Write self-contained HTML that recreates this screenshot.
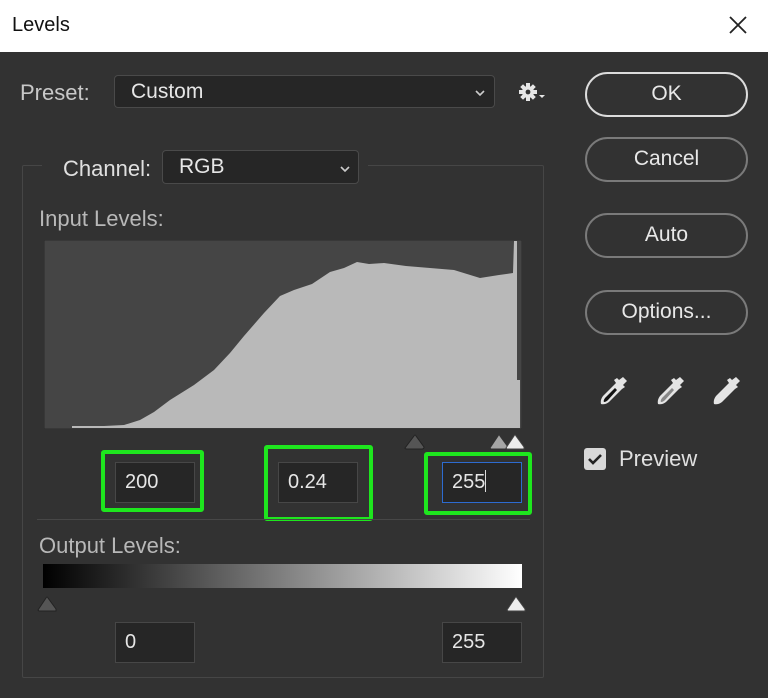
<!DOCTYPE html>
<html><head><meta charset="utf-8"><style>
*{margin:0;padding:0;box-sizing:border-box}
body{width:768px;height:698px;background:#323232;font-family:"Liberation Sans",sans-serif;position:relative;overflow:hidden;color:#ddd}
.a{position:absolute}
.t{font-size:22px;color:#c8c8c8;white-space:nowrap}
.fld{position:absolute;background:#262626;border:1px solid #474747;color:#e6e6e6;font-size:20px;padding-left:9px;line-height:38px}
.btn{position:absolute;left:585px;width:163px;height:45px;border:2px solid #7a7a7a;border-radius:23px;color:#e8e8e8;font-size:21px;text-align:center;line-height:40px}
.g{position:absolute;border:4px solid #1ee61e;border-radius:3px}
.dd{position:absolute;background:#262626;border:1px solid #4a4a4a;border-radius:4px;color:#e6e6e6;font-size:21px;padding-left:16px}
</style></head><body>
<div class="a" style="left:0;top:0;width:768px;height:52px;background:#fff"></div>
<div class="a" style="left:12px;top:14px;font-size:20px;color:#111">Levels</div>
<svg class="a" style="left:728px;top:15px" width="20" height="20"><path d="M2 2L18 18M18 2L2 18" stroke="#222" stroke-width="1.8"/></svg>

<div class="a t" style="left:20px;top:80px">Preset:</div>
<div class="dd" style="left:114px;top:75px;width:381px;height:33px;line-height:31px">Custom</div>
<svg class="a" style="left:474px;top:88px" width="12" height="10"><path d="M2 3L6 7L10 3" stroke="#ccc" stroke-width="1.6" fill="none"/></svg>
<svg class="a" style="left:518px;top:82px" width="32" height="22"><g transform="translate(10,10)" fill="#e6e6e6"><circle r="6"/><rect x="-2" y="-9" width="4" height="18"/><rect x="-9" y="-2" width="18" height="4"/><rect x="-2" y="-9" width="4" height="18" transform="rotate(45)"/><rect x="-2" y="-9" width="4" height="18" transform="rotate(-45)"/><circle r="2.4" fill="#323232"/></g><path d="M21 13h6l-3 3z" fill="#e6e6e6"/></svg>

<div class="a" style="left:22px;top:165px;width:522px;height:513px;border:1px solid #464646;border-radius:2px"></div>
<div class="a" style="left:42px;top:150px;width:326px;height:30px;background:#323232"></div>
<div class="a t" style="left:63px;top:156px;color:#e0e0e0">Channel:</div>
<div class="dd" style="left:162px;top:150px;width:197px;height:34px;line-height:32px">RGB</div>
<svg class="a" style="left:339px;top:164px" width="12" height="10"><path d="M2 3L6 7L10 3" stroke="#ccc" stroke-width="1.6" fill="none"/></svg>

<div class="a t" style="left:39px;top:206px;color:#b8b8b8">Input Levels:</div>
<svg class="a" style="left:44px;top:240px" width="478" height="189">
<rect x="0" y="0" width="478" height="189" fill="#454545" stroke="#2a2a2a"/>
<path d="M28 186 L60 186 L80 185 L96 180 L110 172 L126 160 L150 145 L170 130 L186 113 L200 96 L220 73 L236 56 L250 50 L268 44 L286 32 L300 28 L313 22 L325 24 L340 23 L362 26 L386 28 L410 30 L436 38 L455 35 L469 33 L470 1 L473 1 L473 140 L476 140 L476 188 L28 188Z" fill="#b9b9b9"/>
</svg>
<svg class="a" style="left:402px;top:430px" width="130" height="20">
<path d="M3 18 L12 6 Q13 4 14 6 L22 17 Q22 19 20 19 L5 19Q3 19 3 18Z" fill="#555" stroke="#222"/>
<path d="M88 18 L96 6 Q97 4 98 6 L106 17 L106 19 L89 19Z" fill="#a6a6a6" stroke="#333"/>
<path d="M104 18 L112 6 Q113 4 114 6 L122 17 L122 19 L105 19Z" fill="#ececec" stroke="#444"/>
</svg>

<div class="g" style="left:101px;top:450px;width:103px;height:62px"></div>
<div class="g" style="left:264px;top:445px;width:109px;height:76px"></div>
<div class="g" style="left:424px;top:452px;width:108px;height:63px"></div>
<div class="fld" style="left:115px;top:462px;width:80px;height:41px">200</div>
<div class="fld" style="left:278px;top:462px;width:80px;height:41px">0.24</div>
<div class="fld" style="left:442px;top:462px;width:80px;height:41px;border:1px solid #2d6bd0">255<span style="display:inline-block;width:1px;height:22px;background:#ddd;vertical-align:-4px"></span></div>

<div class="a" style="left:37px;top:519px;width:493px;height:1px;background:#474747"></div>
<div class="a t" style="left:39px;top:533px;color:#b8b8b8">Output Levels:</div>
<div class="a" style="left:43px;top:564px;width:479px;height:24px;background:linear-gradient(to right,#000,#fff)"></div>
<svg class="a" style="left:36px;top:591px" width="490" height="22">
<path d="M2 19 L10 7 Q11 5 12 7 L20 18 L20 20 L3 20Z" fill="#555" stroke="#222"/>
<path d="M471 19 L479 7 Q480 5 481 7 L489 18 L489 20 L472 20Z" fill="#ececec" stroke="#444"/>
</svg>
<div class="fld" style="left:115px;top:622px;width:80px;height:41px">0</div>
<div class="fld" style="left:442px;top:622px;width:80px;height:41px">255</div>

<div class="btn" style="top:72px;border-color:#dcdcdc">OK</div>
<div class="btn" style="top:137px">Cancel</div>
<div class="btn" style="top:213px">Auto</div>
<div class="btn" style="top:290px">Options...</div>

<svg class="a" style="left:595px;top:374px" width="150" height="34">
<g fill="#e4e4e4">
<g transform="translate(0,0)"><path d="M28 3 L32 7 L28 11 L30 13 L27 15 L14 28 Q10 31 6 30 Q5 26 8 22 L21 9 L19 6 L22 4 L24 6Z"/><path d="M20 14 L10 24 Q8 27 9 28 Q11 28 13 26 L22 16Z" fill="#111"/></g>
<g transform="translate(57,0)"><path d="M28 3 L32 7 L28 11 L30 13 L27 15 L14 28 Q10 31 6 30 Q5 26 8 22 L21 9 L19 6 L22 4 L24 6Z"/><path d="M20 14 L10 24 Q8 27 9 28 Q11 28 13 26 L22 16Z" fill="#888"/></g>
<g transform="translate(113,0)"><path d="M28 3 L32 7 L28 11 L30 13 L27 15 L14 28 Q10 31 6 30 Q5 26 8 22 L21 9 L19 6 L22 4 L24 6Z"/></g>
</g></svg>

<div class="a" style="left:584px;top:448px;width:22px;height:22px;background:#d8d8d8;border-radius:3px"></div>
<svg class="a" style="left:584px;top:448px" width="22" height="22"><path d="M5 11L9 15L17 7" stroke="#222" stroke-width="2.6" fill="none"/></svg>
<div class="a t" style="left:619px;top:446px;color:#e0e0e0">Preview</div>
</body></html>
